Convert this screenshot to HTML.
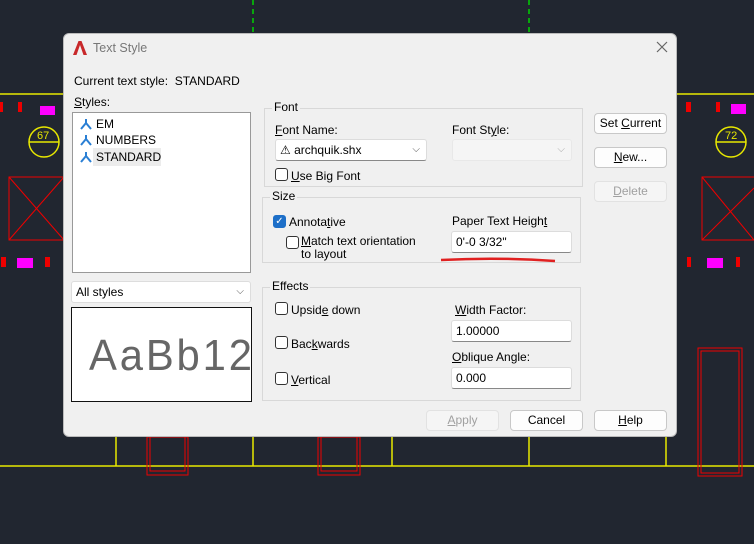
<!DOCTYPE html>
<html><head><meta charset="utf-8"><style>
*{margin:0;padding:0;box-sizing:border-box}
body{width:754px;height:544px;background:#212630;position:relative;overflow:hidden;font-family:"Liberation Sans",sans-serif;font-size:12px;color:#000}
.a{position:absolute}
#dlg{left:63px;top:33px;width:614px;height:404px;background:#f0f0f0;border-radius:6px;border:1px solid #bbb}
.t{position:absolute;white-space:nowrap}
.grp{position:absolute;border:1px solid #d8d8d8;}
.lg{position:absolute;top:-9px;left:7px;background:#f0f0f0;padding:0 2px}
.inp{position:absolute;background:#fff;border:1px solid #dcdcdc;border-bottom:1px solid #888;border-radius:3px;padding:5px 4px;}
.cb{position:absolute;width:13px;height:13px;border:1px solid #333;border-radius:3px;background:#fff}
.btn{position:absolute;width:73px;height:21px;background:#fdfdfd;border:1px solid #c8c8c8;border-radius:4px;text-align:center;line-height:19px}
.dis{color:#a0a0a0;background:#f5f5f5;border-color:#e2e2e2}
u{text-decoration:underline}
.chev{position:absolute;right:6px;top:4px;color:#555;font-size:10px}
.ic{position:absolute;left:16px}
</style></head><body>
<svg class="a" style="left:0;top:0" width="754" height="544">
<g stroke="#00d000" stroke-dasharray="5,4" stroke-width="1.5"><line x1="253" y1="0" x2="253" y2="34"/><line x1="529" y1="0" x2="529" y2="34"/></g>
<g stroke="#e8e800" stroke-width="1.5" fill="none">
<line x1="0" y1="94" x2="64" y2="94"/><line x1="677" y1="94" x2="754" y2="94"/>
<line x1="0" y1="466" x2="754" y2="466"/>
<line x1="116" y1="437" x2="116" y2="466"/><line x1="253" y1="437" x2="253" y2="466"/><line x1="392" y1="437" x2="392" y2="466"/><line x1="529" y1="437" x2="529" y2="466"/><line x1="666" y1="437" x2="666" y2="466"/>
<circle cx="44" cy="142" r="15"/><line x1="29" y1="142" x2="59" y2="142"/>
<circle cx="731" cy="142" r="15"/><line x1="716" y1="142" x2="746" y2="142"/>
</g>
<g fill="#e8e800" font-size="11" font-family="Liberation Sans"><text x="37" y="139">67</text><text x="725" y="139">72</text></g>
<g stroke="#e00" stroke-width="1" fill="none">
<rect x="9" y="177" width="56" height="63"/><line x1="9" y1="177" x2="64" y2="240"/><line x1="9" y1="240" x2="64" y2="177"/>
<rect x="702" y="177" width="60" height="63"/><line x1="702" y1="177" x2="754" y2="240"/><line x1="702" y1="240" x2="754" y2="188"/>
<rect x="147" y="437" width="41" height="38"/><rect x="150" y="437" width="35" height="34"/>
<rect x="318" y="437" width="42" height="38"/><rect x="321" y="437" width="36" height="34"/>
<rect x="698" y="348" width="44" height="128"/><rect x="701" y="351" width="38" height="122"/>
</g>
<g fill="#e00"><rect x="18" y="102" width="4" height="10"/><rect x="0" y="102" width="3" height="10"/><rect x="1" y="257" width="5" height="10"/><rect x="45" y="257" width="5" height="10"/><rect x="686" y="102" width="5" height="10"/><rect x="716" y="102" width="4" height="10"/><rect x="687" y="257" width="4" height="10"/><rect x="736" y="257" width="4" height="10"/></g>
<g fill="#f0f"><rect x="40" y="106" width="15" height="9"/><rect x="17" y="258" width="16" height="10"/><rect x="731" y="104" width="15" height="10"/><rect x="707" y="258" width="16" height="10"/></g>
</svg>
<div id="dlg" class="a">
<svg class="a" style="left:8px;top:6px" width="16" height="16"><path d="M1 15 L6.5 1 L9.5 1 L15 15 L11.5 15 L8 5 L4.5 15 Z" fill="#c8282a"/></svg>
<div class="t" style="left:29px;top:7px;color:#777;font-size:12.5px">Text Style</div>
<svg class="a" style="left:592px;top:7px" width="12" height="12"><path d="M1 1L11 11M11 1L1 11" stroke="#666" stroke-width="1.2"/></svg>
<div class="t" style="left:10px;top:40px">Current text style:&nbsp; STANDARD</div>
<div class="t" style="left:10px;top:61px"><u>S</u>tyles:</div>
<div class="a" style="left:8px;top:78px;width:179px;height:161px;background:#fff;border:1px solid #999"></div>
<svg class="ic" style="top:84px" width="12" height="12"><path d="M6 1V5M6 5L1 11M6 5L11 11" stroke="#2a7fd4" stroke-width="2" fill="none"/></svg>
<div class="t" style="left:32px;top:83px">EM</div>
<svg class="ic" style="top:100px" width="12" height="12"><path d="M6 1V5M6 5L1 11M6 5L11 11" stroke="#2a7fd4" stroke-width="2" fill="none"/></svg>
<div class="t" style="left:32px;top:99px">NUMBERS</div>
<div class="a" style="left:29px;top:114px;width:68px;height:18px;background:#ececec"></div>
<svg class="ic" style="top:117px" width="12" height="12"><path d="M6 1V5M6 5L1 11M6 5L11 11" stroke="#2a7fd4" stroke-width="2" fill="none"/></svg>
<div class="t" style="left:32px;top:116px">STANDARD</div>
<div class="inp" style="left:7px;top:247px;width:180px;height:22px;padding:3px 4px;border-color:#ddd">All styles<span class="chev">⌵</span></div>
<div class="a" style="left:7px;top:273px;width:181px;height:95px;background:#fff;border:1px solid #111;overflow:hidden"><div class="t" style="left:17px;top:23px;font-size:44px;letter-spacing:3px;color:#666;font-weight:normal;transform:scaleX(0.95);transform-origin:left">AaBb12</div></div>
<div class="grp" style="left:200px;top:74px;width:319px;height:79px"><div class="lg">Font</div></div>
<div class="t" style="left:211px;top:89px"><u>F</u>ont Name:</div>
<div class="t" style="left:388px;top:89px">Font St<u>y</u>le:</div>
<div class="inp" style="left:211px;top:105px;width:152px;height:22px;padding:3px 4px">&#x26A0; archquik.shx<span class="chev">⌵</span></div>
<div class="inp" style="left:388px;top:105px;width:120px;height:22px;background:#f5f5f5;border-color:#e8e8e8"><span class="chev" style="color:#aaa">⌵</span></div>
<div class="cb" style="left:211px;top:134px"></div><div class="t" style="left:227px;top:135px"><u>U</u>se Big Font</div>
<div class="grp" style="left:198px;top:163px;width:319px;height:66px"><div class="lg">Size</div></div>
<div class="cb" style="left:209px;top:181px;background:#1d6fc8;border-color:#1d6fc8;color:#fff;font-size:10px;line-height:11px;text-align:center">✓</div>
<div class="t" style="left:225px;top:181px">Annota<u>t</u>ive</div>
<div class="cb" style="left:222px;top:202px"></div><div class="t" style="left:237px;top:201px;line-height:13px"><u>M</u>atch text orientation<br>to layout</div>
<div class="t" style="left:388px;top:180px">Paper Text Heigh<u>t</u></div>
<div class="inp" style="left:387px;top:197px;width:121px;height:22px;padding:3px 4px">0'-0 3/32"</div>
<svg class="a" style="left:375px;top:222px" width="120" height="8"><path d="M2 4 Q60 1 116 5" stroke="#e02020" stroke-width="2.5" fill="none"/></svg>
<div class="grp" style="left:198px;top:253px;width:319px;height:114px"><div class="lg">Effects</div></div>
<div class="cb" style="left:211px;top:268px"></div><div class="t" style="left:227px;top:269px">Upsid<u>e</u> down</div>
<div class="cb" style="left:211px;top:302px"></div><div class="t" style="left:227px;top:303px">Bac<u>k</u>wards</div>
<div class="cb" style="left:211px;top:338px"></div><div class="t" style="left:227px;top:339px"><u>V</u>ertical</div>
<div class="t" style="left:391px;top:269px"><u>W</u>idth Factor:</div>
<div class="inp" style="left:387px;top:286px;width:121px;height:22px;padding:3px 4px">1.00000</div>
<div class="t" style="left:388px;top:316px"><u>O</u>blique Angle:</div>
<div class="inp" style="left:387px;top:333px;width:121px;height:22px;padding:3px 4px">0.000</div>
<div class="btn" style="left:530px;top:79px">Set <u>C</u>urrent</div>
<div class="btn" style="left:530px;top:113px"><u>N</u>ew...</div>
<div class="btn dis" style="left:530px;top:147px"><u>D</u>elete</div>
<div class="btn dis" style="left:362px;top:376px"><u>A</u>pply</div>
<div class="btn" style="left:446px;top:376px">Cancel</div>
<div class="btn" style="left:530px;top:376px"><u>H</u>elp</div>
</div>
</body></html>
